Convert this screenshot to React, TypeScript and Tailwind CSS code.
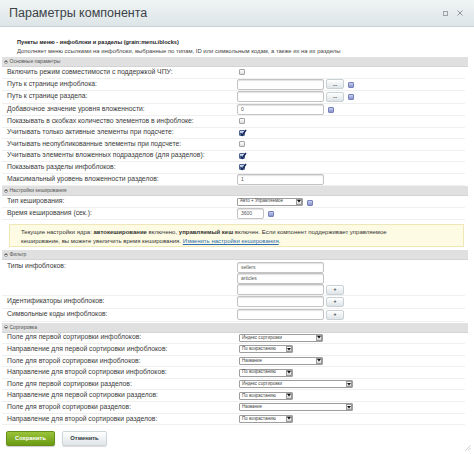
import React from "react";

const Help = () => (
  <span className="inline-block w-[6px] h-[6px] rounded-[1px] border border-[#7581bb] bg-linear-to-b from-[#c8cdee] to-[#8893cd]" />
);

const Check = ({ checked }: { checked?: boolean }) =>
  checked ? (
    <span className="relative ml-[2px] inline-block w-[6px] h-[6px] rounded-[1px] border border-[#4f6394] bg-linear-to-b from-[#d3dcef] to-[#8fa2cb]">
      <svg className="absolute left-[-1px] top-[-2px]" width="8" height="8" viewBox="0 0 8 8">
        <path d="M1.5 4.2 L3.2 6.2 L7 1" stroke="#15285a" strokeWidth="1.5" fill="none" />
      </svg>
    </span>
  ) : (
    <span className="ml-[2px] inline-block w-[6px] h-[6px] rounded-[1px] border border-[#a3a3a3] bg-linear-to-b from-white to-[#dedede]" />
  );

const Input = ({ value = "", w = "w-[87px]" }: { value?: string; w?: string }) => (
  <span
    className={`${w} h-[11px] flex items-center px-[3px] rounded-[2px] border border-[#c3c3c3] bg-white shadow-[inset_0_1px_1px_rgba(0,0,0,0.12)] text-[5px] text-[#555]`}
  >
    {value}
  </span>
);

const SmallBtn = ({ label }: { label: string }) => (
  <span className="w-[18px] h-[10px] flex items-center justify-center rounded-[2px] border border-[#c9d1d4] bg-linear-to-b from-white to-[#dde4e7] text-[5px] font-bold text-[#333] leading-none">
    {label}
  </span>
);

const Select = ({ value, w }: { value: string; w: string }) => (
  <span className={`${w} h-[8px] flex items-center justify-between border border-[#9d9d9d] bg-white rounded-[1px] pl-[2px] text-[4.5px] text-[#444]`}>
    <span className="leading-none">{value}</span>
    <span className="w-[6px] h-[6px] mr-[0.5px] flex items-center justify-center border border-[#9a9a9a] bg-linear-to-b from-white to-[#d5d5d5]">
      <svg width="4" height="3" viewBox="0 0 4 3">
        <path d="M0 0 L4 0 L2 2.5 Z" fill="#111" />
      </svg>
    </span>
  </span>
);

const Section = ({ title }: { title: string }) => (
  <div className="ml-[2px] w-[466px] h-[10px] flex items-center bg-[#e0e0e0] border-b border-[#d4d4d4]">
    <span className="ml-[1.5px] w-[4px] h-[4px] rounded-full border border-[#999] bg-white flex items-center justify-center">
      <span className="w-[2px] h-[0.6px] bg-[#666]" />
    </span>
    <span className="ml-[2px] text-[5px] text-[#555] leading-none">{title}</span>
  </div>
);

const Row = ({
  label,
  h,
  children,
}: {
  label: string;
  h: string;
  children?: React.ReactNode;
}) => (
  <div className={`ml-[2px] w-[463px] ${h} flex items-center border-b border-[#efefef]`}>
    <div className="w-[235px] pl-[5px] text-[6.8px] text-[#3a3a3a] leading-none whitespace-nowrap">{label}</div>
    <div className="flex items-center gap-[2px]">{children}</div>
  </div>
);

const main = [
  { label: "Включить режим совместимости с поддержкой ЧПУ:", type: "cb", checked: false },
  { label: "Путь к странице инфоблока:", type: "path" },
  { label: "Путь к странице раздела:", type: "path" },
  { label: "Добавочное значение уровня вложенности:", type: "num", value: "0" },
  { label: "Показывать в скобках количество элементов в инфоблоке:", type: "cb", checked: false },
  { label: "Учитывать только активные элементы при подсчете:", type: "cb", checked: true },
  { label: "Учитывать неопубликованные элементы при подсчете:", type: "cb", checked: false },
  { label: "Учитывать элементы вложенных подразделов (для разделов):", type: "cb", checked: true },
  { label: "Показывать разделы инфоблоков:", type: "cb", checked: true },
  { label: "Максимальный уровень вложенности разделов:", type: "text", value: "1" },
];

const sorts = [
  { label: "Поле для первой сортировки инфоблоков:", value: "Индекс сортировки", w: "w-[84px]" },
  { label: "Направление для первой сортировки инфоблоков:", value: "По возрастанию", w: "w-[54px]" },
  { label: "Поле для второй сортировки инфоблоков:", value: "Название", w: "w-[84px]" },
  { label: "Направление для второй сортировки инфоблоков:", value: "По возрастанию", w: "w-[54px]" },
  { label: "Поле для первой сортировки разделов:", value: "Индекс сортировки", w: "w-[114px]" },
  { label: "Направление для первой сортировки разделов:", value: "По возрастанию", w: "w-[54px]" },
  { label: "Поле для второй сортировки разделов:", value: "Название", w: "w-[114px]" },
  { label: "Направление для второй сортировки разделов:", value: "По возрастанию", w: "w-[54px]" },
];

export default function App() {
  return (
    <div className="relative w-[474px] h-[454px] overflow-hidden bg-white font-['Liberation_Sans',Arial,sans-serif]">
      {/* title bar */}
      <div className="h-[27px] flex items-center justify-between pl-[9px] pr-[11px] bg-linear-to-b from-[#f0f4f5] to-[#dde5e8] border-b border-[#c9d3d7]">
        <span className="text-[12.5px] text-[#3b4247] leading-none">Параметры компонента</span>
        <div className="flex items-center gap-[9px]">
          <span className="w-[5px] h-[5px] border border-[#9aa3a7]" />
          <svg width="6" height="6" viewBox="0 0 6 6">
            <path d="M0.5 0.5 L5.5 5.5 M5.5 0.5 L0.5 5.5" stroke="#8d979b" strokeWidth="1" />
          </svg>
        </div>
      </div>

      {/* component info */}
      <div className="pt-[11px] pl-[17px] h-[30px]">
        <div className="text-[5.6px] font-bold text-[#222] leading-[9px]">
          Пункты меню - инфоблоки и разделы (grain:menu.iblocks)
        </div>
        <div className="text-[5.9px] text-[#444] leading-[9px]">
          Дополняет меню ссылками на инфоблоки, выбранные по типам, ID или символьным кодам, а также их на их разделы
        </div>
      </div>

      <Section title="Основные параметры" />
      {main.map((r) => (
        <Row key={r.label} label={r.label} h={r.type === "cb" ? "h-[11.5px]" : "h-[12.5px]"}>
          {r.type === "cb" && <Check checked={r.checked} />}
          {r.type === "path" && (
            <>
              <Input />
              <SmallBtn label="..." />
              <span className="ml-[2px] -mt-[3px]">
                <Help />
              </span>
            </>
          )}
          {r.type === "num" && (
            <>
              <Input value={r.value} />
              <span className="ml-[2px] -mt-[3px]">
                <Help />
              </span>
            </>
          )}
          {r.type === "text" && <Input value={r.value} />}
        </Row>
      ))}

      <Section title="Настройки кеширования" />
      <Row label="Тип кеширования:" h="h-[12px]">
        <Select value="Авто + Управляемое" w="w-[66px]" />
        <span className="ml-[2px] -mt-[2px]">
          <Help />
        </span>
      </Row>
      <Row label="Время кеширования (сек.):" h="h-[12px]">
        <Input value="3600" w="w-[27px]" />
        <span className="ml-[2px] -mt-[3px]">
          <Help />
        </span>
      </Row>
      <div className="mt-[4px] ml-[9px] w-[455px] h-[23px] px-[11px] pt-[3px] bg-[#fdfbe3] border border-[#efe7b8] text-[6px] text-[#333] leading-[9px]">
        <p className="whitespace-nowrap">
          Текущие настройки ядра: <b>автокеширование</b> включено, <b>управляемый кеш</b> включен. Если компонент поддерживает управляемое
        </p>
        <p className="whitespace-nowrap">
          кеширование, вы можете увеличить время кеширования.{" "}
          <span className="text-[#2c6bb4] underline">Изменить настройки кеширования</span>.
        </p>
      </div>

      <div className="mt-[3px]">
        <Section title="Фильтр" />
      </div>
      <div className="ml-[2px] w-[463px] h-[36px] flex border-b border-[#efefef]">
        <div className="w-[235px] pl-[5px] pt-[3px] text-[6.8px] text-[#3a3a3a] leading-none">Типы инфоблоков:</div>
        <div className="pt-[2px] flex flex-col gap-[0.5px]">
          <Input value="sellers" />
          <Input value="articles" />
          <div className="flex items-center gap-[2px]">
            <Input />
            <SmallBtn label="+" />
          </div>
        </div>
      </div>
      <Row label="Идентификаторы инфоблоков:" h="h-[12.5px]">
        <Input />
        <SmallBtn label="+" />
      </Row>
      <Row label="Символьные коды инфоблоков:" h="h-[13px]">
        <Input />
        <SmallBtn label="+" />
      </Row>

      <div className="mt-[1px]">
        <Section title="Сортировка" />
      </div>
      {sorts.map((s) => (
        <Row key={s.label} label={s.label} h="h-[11.6px]">
          <span className="ml-[2px]">
            <Select value={s.value} w={s.w} />
          </span>
        </Row>
      ))}

      {/* buttons */}
      <div className="mt-[6px] ml-[6px] flex items-center gap-[7px]">
        <span className="w-[49px] h-[15px] flex items-center justify-center rounded-[2px] bg-linear-to-b from-[#9ac43a] to-[#6b9a12] border border-[#66901a] text-[5.8px] font-bold text-white shadow-[0_1px_1px_rgba(0,0,0,0.2)]">
          Сохранить
        </span>
        <span className="w-[45px] h-[15px] flex items-center justify-center rounded-[2px] bg-linear-to-b from-white to-[#dfe5e8] border border-[#cfd6d9] text-[5.8px] font-bold text-[#2f3b40] shadow-[0_1px_1px_rgba(0,0,0,0.15)]">
          Отменить
        </span>
      </div>

      {/* resize grip */}
      <svg className="absolute right-[3px] bottom-[3px]" width="6" height="6" viewBox="0 0 6 6">
        <path d="M5.5 0.5 L0.5 5.5 M5.5 3 L3 5.5" stroke="#b5b5b5" strokeWidth="0.7" />
      </svg>
    </div>
  );
}
